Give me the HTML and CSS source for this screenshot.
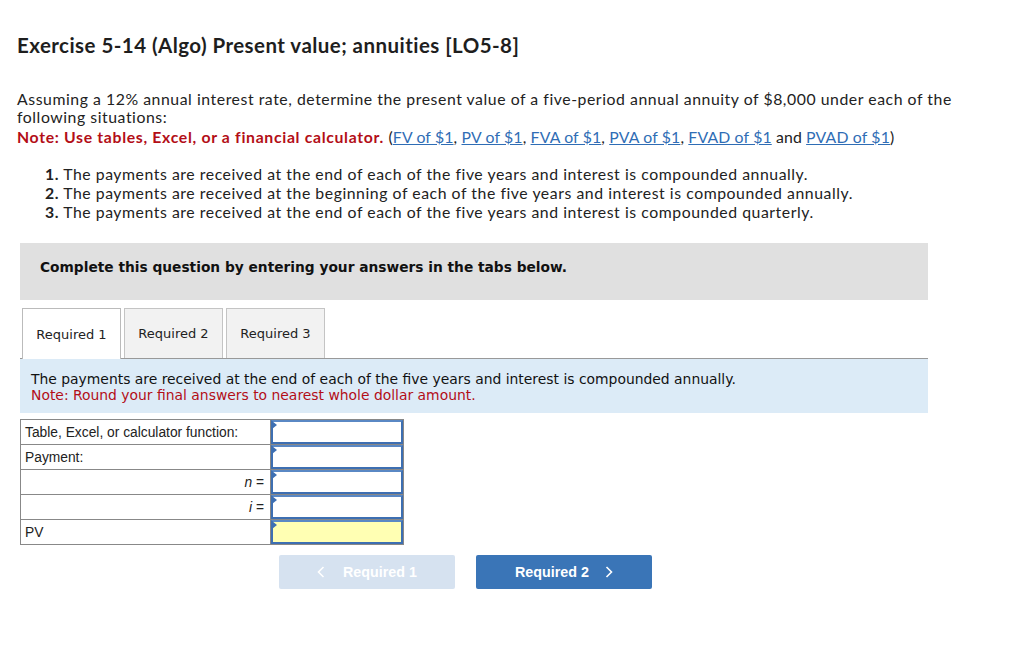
FILE: index.html
```html
<!DOCTYPE html>
<html>
<head>
<meta charset="utf-8">
<link rel="stylesheet" href="styles.css">
</head>
<body>
<div class="page">
  <h1 class="title">Exercise 5-14 (Algo) Present value; annuities [LO5-8]</h1>
  <div class="intro">
    <p class="lead">Assuming a 12% annual interest rate, determine the present value of a five-period annual annuity of $8,000 under each of the following situations:</p>
    <p class="noteline"><span class="note">Note: Use tables, Excel, or a financial calculator.</span> <span class="refs">(<a href="#">FV of $1</a>, <a href="#">PV of $1</a>, <a href="#">FVA of $1</a>, <a href="#">PVA of $1</a>, <a href="#">FVAD of $1</a> and <a href="#">PVAD of $1</a>)</span></p>
  </div>
  <div class="list">
    <div class="item"><b class="num">1.</b> The payments are received at the end of each of the five years and interest is compounded annually.</div>
    <div class="item"><b class="num">2.</b> The payments are received at the beginning of each of the five years and interest is compounded annually.</div>
    <div class="item"><b class="num">3.</b> The payments are received at the end of each of the five years and interest is compounded quarterly.</div>
  </div>
  <div class="panel">
    <div class="banner">Complete this question by entering your answers in the tabs below.</div>
    <div class="tabs">
      <div class="tab active">Required 1</div>
      <div class="tab">Required 2</div>
      <div class="tab">Required 3</div>
    </div>
    <div class="info">
      <div>The payments are received at the end of each of the five years and interest is compounded annually.</div>
      <div class="red">Note: Round your final answers to nearest whole dollar amount.</div>
    </div>
    <table class="grid">
      <colgroup><col class="c1"><col class="c2"></colgroup>
      <tr><td class="lbl">Table, Excel, or calculator function:</td><td class="inp"><span class="box"></span></td></tr>
      <tr><td class="lbl">Payment:</td><td class="inp"><span class="box"></span></td></tr>
      <tr><td class="lbl right"><i>n</i> =</td><td class="inp"><span class="box"></span></td></tr>
      <tr><td class="lbl right"><i>i</i> =</td><td class="inp"><span class="box"></span></td></tr>
      <tr><td class="lbl">PV</td><td class="inp"><span class="box yellow"></span></td></tr>
    </table>
    <div class="nav">
      <button class="btn prev"><svg class="chev" width="8" height="12" viewBox="0 0 8 12"><path d="M6.5 1 L1.5 6 L6.5 11" fill="none" stroke="#fff" stroke-width="1.6"/></svg>Required 1</button>
      <button class="btn next">Required 2<svg class="chev r" width="8" height="12" viewBox="0 0 8 12"><path d="M1.5 1 L6.5 6 L1.5 11" fill="none" stroke="#fff" stroke-width="1.6"/></svg></button>
    </div>
  </div>
</div>
</body>
</html>
```
FILE: styles.css
```css
html, body { margin: 0; padding: 0; background: #fff; }
.page {
  padding-left: 17px;
  font-family: Lato, "Liberation Sans", sans-serif;
  color: #222;
}
.title {
  font-size: 20.5px;
  line-height: 24px;
  font-weight: 700;
  letter-spacing: 0.45px;
  margin: 33px 0 0;
  color: #1e1e1e;
}
.intro {
  font-size: 15.8px;
  letter-spacing: 0.55px;
  margin: 33px 0 0;
  width: 960px;
}
.intro p { margin: 0; }
.lead { line-height: 18px; }
.noteline { line-height: 19px; margin-top: 1px !important; }
.note { color: #b30e17; font-weight: 700; letter-spacing: 0.67px; }
.refs { letter-spacing: 0.15px; }
.intro a { color: #2f6db5; text-decoration: underline; }
.list {
  margin-top: 18px;
  padding-left: 28px;
  font-size: 15.8px;
  letter-spacing: 0.55px;
  line-height: 19px;
}
.item { height: 19px; }
.num { display: inline-block; line-height: 19px; }
.panel { margin-left: 3px; width: 908px; }
.banner {
  margin-top: 22px;
  background: #e0e0e0;
  height: 57px;
  box-sizing: border-box;
  padding: 15px 0 0 20px;
  font-family: "DejaVu Sans", Verdana, sans-serif;
  font-weight: 700;
  font-size: 13.75px;
  line-height: 18px;
  color: #111;
}
.tabs {
  display: flex;
  gap: 3px;
  margin-top: 8px;
  padding-left: 2px;
  border-bottom: 1px solid #999;
  height: 50px;
}
.tab {
  width: 99px;
  box-sizing: border-box;
  border: 1px solid #c4c4c4;
  border-bottom: none;
  background: #f2f2f2;
  font-family: "DejaVu Sans", Verdana, sans-serif;
  font-size: 13px;
  color: #222;
  display: flex;
  align-items: center;
  justify-content: center;
  height: 50px;
}
.tab.active { background: #fff; height: 51px; border-color: #bbb; }
.info {
  background: #dcebf7;
  height: 54px;
  box-sizing: border-box;
  padding: 12px 0 0 11px;
  font-family: "DejaVu Sans", Verdana, sans-serif;
  font-size: 13.9px;
  line-height: 16px;
  color: #111;
}
.red { color: #b30e17; }
.grid {
  margin-top: 6px;
  border-collapse: collapse;
  table-layout: fixed;
  width: 383px;
  font-family: "Liberation Sans", Arial, sans-serif;
  font-size: 13.8px;
  color: #222;
}
.c1 { width: 250px; }
.c2 { width: 133px; }
.grid td { border: 1px solid #888; height: 24px; padding: 0; }
.lbl { padding-left: 4px !important; }
.lbl.right { text-align: right; padding-right: 6px !important; }
.box {
  display: block;
  height: 24px;
  box-sizing: border-box;
  border: 2px solid #3d6fb2;
  border-top-color: #5a88c4;
  background: #fff;
  position: relative;
}
.box::before {
  content: "";
  position: absolute;
  left: -1px; top: -1px;
  border-left: 5px solid #3d6fb2;
  border-top: 4px solid transparent;
  border-bottom: 4px solid transparent;
}
.box.yellow { background: #ffffb3; }
.nav {
  display: flex;
  gap: 21px;
  margin: 10px 0 0 259px;
}
.btn {
  width: 176px;
  height: 34px;
  border: none;
  border-radius: 2px;
  font-family: "Liberation Sans", Arial, sans-serif;
  font-weight: 700;
  font-size: 14.3px;
  color: #fff;
  display: flex;
  align-items: center;
  justify-content: center;
  padding: 0;
}
.prev { background: #d6e2f0; }
.next { background: #3a75b7; }
.chev { margin-right: 18px; }
.chev.r { margin: 0 0 0 16px; }
```
